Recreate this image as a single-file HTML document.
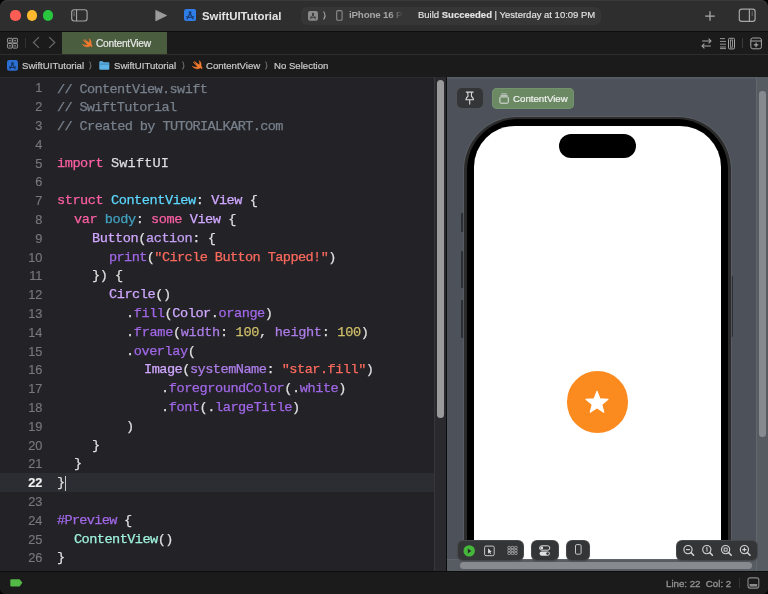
<!DOCTYPE html>
<html><head><meta charset="utf-8">
<style>
*{margin:0;padding:0;box-sizing:border-box}
html,body{width:768px;height:594px;overflow:hidden;background:#000}
body{position:relative;font-family:"Liberation Sans",sans-serif}
.a{position:absolute}
#title{left:0;top:0;width:768px;height:31px;background:#2e2e2e;border-radius:7px 7px 0 0;box-shadow:inset 0 1px 0 #3a3a3a}
#tline{left:0;top:31px;width:768px;height:1px;background:#0e0e0e}
#tabs{left:0;top:32px;width:768px;height:22px;background:#1b1b1b}
#tsep{left:0;top:54px;width:768px;height:1px;background:#2e2e2e}
#crumb{left:0;top:55px;width:768px;height:22px;background:#1b1b1b}
#editor{left:0;top:77px;width:434px;height:494px;background:#222227;border-top:1px solid #2c2c30}
#hl{left:0;top:473.2px;width:434px;height:18.8px;background:#2c2d33}
#vtrack{left:434px;top:77px;width:12px;height:494px;background:#29292e;border-left:1px solid #36363b}
#vthumb{left:437px;top:80px;width:7px;height:338px;background:#9a9a9c;border-radius:4px}
#div{left:446px;top:77px;width:1px;height:494px;background:#0c0c0e}
#canvas{left:447px;top:77px;width:321px;height:494px;background:#4d525a;overflow:hidden}
#status{left:0;top:571px;width:768px;height:23px;background:#1b1b1b;border-top:1px solid #0d0d0d;border-radius:0 0 5px 5px}
.code{will-change:transform;font-family:"Liberation Mono",monospace;font-size:13.6px;letter-spacing:-0.45px;-webkit-text-stroke:0.25px currentColor;line-height:18.76px;white-space:pre;color:#dfdfe0}
.ln{will-change:transform;font-family:"Liberation Sans",sans-serif;font-size:12.8px;letter-spacing:-0.3px;-webkit-text-stroke:0.15px currentColor;line-height:18.76px;color:#77777c;text-align:right;width:42px;left:0}
.ln.cur{color:#f2f2f2;font-weight:bold}
.c{color:#78808b}.k{color:#fc5fa3}.td{color:#5dd8ff}.od{color:#41a1c0}.t{color:#d0a8ff}.t2{color:#c4a0f4}.f{color:#a167e6}.f2{color:#ad7de8}.s{color:#fc6a5d}.n{color:#d0bf69}.p{color:#9ef1dd}
.crumbt{will-change:transform;font-size:9.6px;letter-spacing:0px;line-height:12px;color:#cacaca;white-space:nowrap;-webkit-text-stroke:0.2px currentColor}
.tb{border-radius:5px;background:#343536;box-shadow:0 0 0 1px #48494c,0 1px 2px rgba(0,0,0,.25)}

.g{will-change:transform}

</style></head><body>
<div id="title" class="a"></div>
<div class="a" style="left:10.4px;top:10.4px;width:10.2px;height:10.2px;border-radius:50%;background:#fd5d55"></div>
<div class="a" style="left:26.8px;top:10.4px;width:10.2px;height:10.2px;border-radius:50%;background:#fdb82e"></div>
<div class="a" style="left:43.1px;top:10.4px;width:10.2px;height:10.2px;border-radius:50%;background:#29c640"></div>
<svg class="a" style="left:70px;top:8px" width="19" height="15" viewBox="0 0 19 15"><rect x="1.7" y="1.7" width="15.4" height="11.3" rx="2.4" fill="none" stroke="#a4a4a4" stroke-width="1.15"/><line x1="6.55" y1="1.7" x2="6.55" y2="13" stroke="#a4a4a4" stroke-width="1.15"/><line x1="4.1" y1="3.6" x2="4.1" y2="8.2" stroke="#7c7c7c" stroke-width="1.1" stroke-dasharray="0.8 0.45"/></svg>
<svg class="a" style="left:154px;top:9px" width="14" height="14" viewBox="0 0 14 14"><path d="M1.8 1.4 L12.6 6.5 L1.8 11.8 Z" fill="#9c9c9c" stroke="#9c9c9c" stroke-width="0.8" stroke-linejoin="round"/></svg>
<svg class="a" style="left:183.9px;top:8.9px" width="12.3" height="12.2" viewBox="0 0 12.3 12.2"><rect x="0" y="0" width="12.2" height="12.1" rx="2.4" fill="#2f7de8"/><g stroke="#183c70" stroke-width="1.15" fill="none" stroke-linecap="round"><path d="M6.1 4.2 L3.1 9.9 M6.1 4.2 L9.1 9.9"/><path d="M2.6 7.7 Q6.1 9.2 9.6 7.7"/></g><circle cx="6.1" cy="3.6" r="1.35" fill="#183c70"/></svg>
<div class="a g" style="left:202px;top:8.5px;font-weight:bold;font-size:11.4px;line-height:14px;color:#e4e4e4">SwiftUITutorial</div>
<div class="a" style="left:301px;top:7px;width:300px;height:17.7px;border-radius:6px;background:#363636"></div>
<svg class="a" style="left:307.8px;top:10.6px" width="10.2" height="10" viewBox="0 0 10.2 10"><rect x="0" y="0" width="10" height="9.8" rx="2" fill="#8c8c8c"/><g stroke="#3c3c3c" stroke-width="0.95" fill="none" stroke-linecap="round"><path d="M5 3.5 L2.6 8 M5 3.5 L7.4 8"/><path d="M2.2 6.2 Q5 7.4 7.8 6.2"/></g><circle cx="5" cy="2.9" r="1.05" fill="#3c3c3c"/></svg>
<svg class="a" style="left:322px;top:10px" width="6" height="11" viewBox="0 0 6 11"><path d="M1.5 1.5 Q4.5 5.5 1.5 9.5" stroke="#a0a0a0" stroke-width="1.2" fill="none"/></svg>
<svg class="a" style="left:335.5px;top:10.2px" width="7" height="11" viewBox="0 0 7 11"><rect x="0.7" y="0.6" width="5.4" height="9.6" rx="1.3" fill="none" stroke="#8c8c8c" stroke-width="1.1"/></svg>
<div class="a g" style="left:349px;top:9.4px;font-weight:bold;font-size:9.8px;letter-spacing:-0.2px;line-height:12px;color:#a6a6a6;width:54px;overflow:hidden;white-space:nowrap;-webkit-mask-image:linear-gradient(90deg,#000 76%,transparent 100%)">iPhone 16 Pro</div>
<div class="a g" style="left:417.6px;top:9.2px;font-size:9.5px;letter-spacing:0px;line-height:12px;color:#e2e2e2;white-space:nowrap;-webkit-text-stroke:0.15px currentColor">Build <b>Succeeded</b> | Yesterday at 10:09 PM</div>
<svg class="a" style="left:704px;top:9.5px" width="12" height="12" viewBox="0 0 12 12"><path d="M6 1.2 V10.8 M1.2 6 H10.8" stroke="#ababab" stroke-width="1.25"/></svg>
<svg class="a" style="left:738px;top:8px" width="18.5" height="14.5" viewBox="0 0 18.5 14.5"><rect x="1.3" y="1.2" width="15.8" height="12.2" rx="2.4" fill="none" stroke="#a6a6a6" stroke-width="1.2"/><line x1="11.4" y1="1.2" x2="11.4" y2="13.4" stroke="#a6a6a6" stroke-width="1.2"/><line x1="14.2" y1="3.6" x2="14.2" y2="8.5" stroke="#7a7a7a" stroke-width="1.2" stroke-dasharray="1 0.6"/></svg>
<div id="tline" class="a"></div>
<div id="tabs" class="a"></div>
<svg class="a" style="left:6px;top:36.5px" width="13" height="13" viewBox="0 0 13 13"><g fill="none" stroke="#a0a0a0" stroke-width="0.95"><rect x="1.6" y="1.3" width="4.6" height="4.6" rx="0.6"/><rect x="6.8" y="1.3" width="4.6" height="4.6" rx="0.6"/><rect x="1.6" y="6.5" width="4.6" height="4.6" rx="0.6"/><rect x="6.8" y="6.5" width="4.6" height="4.6" rx="0.6"/></g><g fill="#8a8a8a"><rect x="3.1" y="2.9" width="1.6" height="1.4"/><rect x="8.3" y="2.9" width="1.6" height="1.4"/><rect x="3.1" y="8.1" width="1.6" height="1.4"/><rect x="8.3" y="8.1" width="1.6" height="1.4"/></g></svg>
<div class="a" style="left:25px;top:38px;width:1px;height:9.5px;background:#333"></div>
<svg class="a" style="left:31px;top:36px" width="26" height="13" viewBox="0 0 26 13"><path d="M8 1.2 L2.4 6.5 L8 11.8 M18.2 1.2 L23.8 6.5 L18.2 11.8" stroke="#6e6e6e" stroke-width="1.1" fill="none"/></svg>
<div class="a" style="left:62px;top:32px;width:104.7px;height:22px;background:#4a5d3f"></div>
<svg class="a swift" style="left:82px;top:38.4px" width="11" height="10" viewBox="0 0 11 10"><path d="M7.2 0.6 C8.8 2 9.6 4.2 9 5.8 C9.8 6.7 10.2 7.8 10 8.9 C9.5 8 8.4 7.6 7.6 8.2 C5 9.6 1.9 8.4 0.3 6.3 C2.2 7.4 4.4 7.4 5.8 6.6 C4 5.4 2.4 3.6 1.3 2.1 C3 3.5 4.8 4.6 5.8 5.1 C4.6 4.1 3.3 2.5 2.5 1.3 C4.6 3.2 6.4 4.4 7.3 4.9 C7.9 3.6 7.7 2 7.2 0.6 Z" fill="#f57a2e" stroke="#f57a2e" stroke-width="0.55" stroke-linejoin="round"/></svg>
<div class="a g" style="left:95.5px;top:38.3px;font-size:10.2px;letter-spacing:-0.25px;line-height:12px;color:#e8e8e8;-webkit-text-stroke:0.2px currentColor">ContentView</div>
<svg class="a" style="left:700px;top:36.5px" width="13" height="13" viewBox="0 0 13 13"><path d="M2.2 4 H11 M8.6 1.6 L11 4 L8.6 6.4 M10.8 9 H2 M4.4 6.6 L2 9 L4.4 11.4" stroke="#a6a6a6" stroke-width="1.05" fill="none"/></svg>
<svg class="a" style="left:719px;top:36.5px" width="17" height="13" viewBox="0 0 17 13"><path d="M1 1.6 H6 M1 4.4 H7 M1 7.2 H7 M1 10 H7 M1 11.6 H7" stroke="#9a9a9a" stroke-width="0.95"/><rect x="9.5" y="1.3" width="6" height="10.6" rx="1" fill="none" stroke="#a6a6a6" stroke-width="1"/><rect x="11.5" y="3" width="2" height="7.2" fill="none" stroke="#a6a6a6" stroke-width="0.8"/></svg>
<div class="a" style="left:742px;top:38px;width:1px;height:9.5px;background:#3a3a3a"></div>
<svg class="a" style="left:749.5px;top:36.5px" width="12.5" height="13" viewBox="0 0 12.5 13"><rect x="0.8" y="1" width="10.6" height="10.8" rx="2" fill="none" stroke="#a6a6a6" stroke-width="1"/><line x1="0.8" y1="4" x2="11.4" y2="4" stroke="#a6a6a6" stroke-width="1"/><path d="M6.1 5.6 V10.2 M3.8 7.9 H8.4" stroke="#c0c0c0" stroke-width="1"/></svg>
<div id="tsep" class="a"></div>
<div id="crumb" class="a"></div>
<svg class="a" style="left:7px;top:60.2px" width="11.2" height="11" viewBox="0 0 11.2 11"><rect x="0" y="0" width="11" height="10.8" rx="2.2" fill="#2c6fd4"/><g stroke="#16335f" stroke-width="1.05" fill="none" stroke-linecap="round"><path d="M5.5 3.8 L2.8 8.9 M5.5 3.8 L8.2 8.9"/><path d="M2.3 6.9 Q5.5 8.2 8.7 6.9"/></g><circle cx="5.5" cy="3.2" r="1.2" fill="#16335f"/></svg>
<div class="a crumbt" style="left:21.9px;top:59.6px">SwiftUITutorial</div>
<svg class="a" style="left:87.5px;top:60px" width="6" height="11" viewBox="0 0 6 11"><path d="M1.5 1.5 Q4.2 5.5 1.5 9.5" stroke="#6a6a6a" stroke-width="1.1" fill="none"/></svg>
<svg class="a" style="left:99.4px;top:60.8px" width="10.6" height="9" viewBox="0 0 10.6 9"><path d="M0.3 1.1 Q0.3 0.2 1.2 0.2 H3.6 L4.6 1.2 H9.4 Q10.3 1.2 10.3 2.1 V7.8 Q10.3 8.7 9.4 8.7 H1.2 Q0.3 8.7 0.3 7.8 Z" fill="#5cb2e6"/><rect x="0.3" y="2.6" width="10" height="0.9" fill="#3f7fa8"/></svg>
<div class="a crumbt" style="left:114.4px;top:59.6px">SwiftUITutorial</div>
<svg class="a" style="left:180.5px;top:60px" width="6" height="11" viewBox="0 0 6 11"><path d="M1.5 1.5 Q4.2 5.5 1.5 9.5" stroke="#6a6a6a" stroke-width="1.1" fill="none"/></svg>
<svg class="a" style="left:191.8px;top:60.2px" width="11" height="10" viewBox="0 0 11 10"><path d="M7.2 0.6 C8.8 2 9.6 4.2 9 5.8 C9.8 6.7 10.2 7.8 10 8.9 C9.5 8 8.4 7.6 7.6 8.2 C5 9.6 1.9 8.4 0.3 6.3 C2.2 7.4 4.4 7.4 5.8 6.6 C4 5.4 2.4 3.6 1.3 2.1 C3 3.5 4.8 4.6 5.8 5.1 C4.6 4.1 3.3 2.5 2.5 1.3 C4.6 3.2 6.4 4.4 7.3 4.9 C7.9 3.6 7.7 2 7.2 0.6 Z" fill="#f57a2e" stroke="#f57a2e" stroke-width="0.55" stroke-linejoin="round"/></svg>
<div class="a crumbt" style="left:206.3px;top:59.6px">ContentView</div>
<svg class="a" style="left:264px;top:60px" width="6" height="11" viewBox="0 0 6 11"><path d="M1.5 1.5 Q4.2 5.5 1.5 9.5" stroke="#6a6a6a" stroke-width="1.1" fill="none"/></svg>
<div class="a crumbt" style="left:274.3px;top:59.6px">No Selection</div>
<div id="editor" class="a"></div>
<div id="hl" class="a"></div>
<div class="a ln" style="top:79.30px">1</div>
<div class="a code" style="top:80.50px;left:57.00px;letter-spacing:-0.650px"><span class="c">// ContentView.swift</span></div>
<div class="a ln" style="top:98.10px">2</div>
<div class="a code" style="top:99.10px;left:57.00px;letter-spacing:-0.690px"><span class="c">// SwiftTutorial</span></div>
<div class="a ln" style="top:116.90px">3</div>
<div class="a code" style="top:117.70px;left:57.00px;letter-spacing:-0.630px"><span class="c">// Created by TUTORIALKART.com</span></div>
<div class="a ln" style="top:135.70px">4</div>
<div class="a ln" style="top:154.50px">5</div>
<div class="a code" style="top:154.50px;left:57.00px"><span class="k">import</span> <span style="letter-spacing:0.15px">SwiftUI</span></div>
<div class="a ln" style="top:173.30px">6</div>
<div class="a ln" style="top:192.10px">7</div>
<div class="a code" style="top:192.10px;left:57.00px"><span class="k">struct</span> <span class="td">ContentView</span>: <span class="t">View</span> {</div>
<div class="a ln" style="top:210.90px">8</div>
<div class="a code" style="top:210.90px;left:74.30px"><span class="k">var</span> <span class="od">body</span>: <span class="k">some</span> <span class="t">View</span> {</div>
<div class="a ln" style="top:229.70px">9</div>
<div class="a code" style="top:229.70px;left:91.60px"><span class="t">Button</span>(<span class="t2">action</span>: {</div>
<div class="a ln" style="top:248.50px">10</div>
<div class="a code" style="top:248.50px;left:108.90px;letter-spacing:-0.600px"><span class="f">print</span>(<span class="s">"Circle Button Tapped!"</span>)</div>
<div class="a ln" style="top:267.30px">11</div>
<div class="a code" style="top:267.30px;left:91.60px">}) {</div>
<div class="a ln" style="top:286.10px">12</div>
<div class="a code" style="top:286.10px;left:108.90px"><span class="t">Circle</span>()</div>
<div class="a ln" style="top:304.90px">13</div>
<div class="a code" style="top:304.90px;left:126.20px">.<span class="f">fill</span>(<span class="t">Color</span>.<span class="f">orange</span>)</div>
<div class="a ln" style="top:323.70px">14</div>
<div class="a code" style="top:323.70px;left:126.20px;letter-spacing:-0.330px">.<span class="f">frame</span>(<span class="f2">width</span>: <span class="n">100</span>, <span class="f2">height</span>: <span class="n">100</span>)</div>
<div class="a ln" style="top:342.50px">15</div>
<div class="a code" style="top:342.50px;left:126.20px">.<span class="f">overlay</span>(</div>
<div class="a ln" style="top:361.30px">16</div>
<div class="a code" style="top:361.30px;left:143.50px;letter-spacing:-0.510px"><span class="t">Image</span>(<span class="f2">systemName</span>: <span class="s">"star.fill"</span>)</div>
<div class="a ln" style="top:380.10px">17</div>
<div class="a code" style="top:380.10px;left:160.80px">.<span class="f">foregroundColor</span>(.<span class="f">white</span>)</div>
<div class="a ln" style="top:398.90px">18</div>
<div class="a code" style="top:398.90px;left:160.80px">.<span class="f">font</span>(.<span class="f">largeTitle</span>)</div>
<div class="a ln" style="top:417.70px">19</div>
<div class="a code" style="top:417.70px;left:126.20px">)</div>
<div class="a ln" style="top:436.50px">20</div>
<div class="a code" style="top:436.50px;left:91.60px">}</div>
<div class="a ln" style="top:455.30px">21</div>
<div class="a code" style="top:455.30px;left:74.30px">}</div>
<div class="a ln cur" style="top:474.10px">22</div>
<div class="a code" style="top:474.10px;left:57.00px">}</div>
<div class="a ln" style="top:492.90px">23</div>
<div class="a ln" style="top:511.70px">24</div>
<div class="a code" style="top:511.70px;left:57.00px;letter-spacing:-0.710px"><span class="f">#Preview</span> {</div>
<div class="a ln" style="top:530.50px">25</div>
<div class="a code" style="top:530.50px;left:74.30px;letter-spacing:-0.550px"><span class="p">ContentView</span>()</div>
<div class="a ln" style="top:549.30px">26</div>
<div class="a code" style="top:549.30px;left:57.00px">}</div>
<div class="a" style="left:65px;top:475.5px;width:1px;height:15px;background:#c8c8c8"></div>
<div id="vtrack" class="a"></div>
<div id="vthumb" class="a"></div>
<div id="div" class="a"></div>
<div id="canvas" class="a">
  <div class="a" style="left:0;top:0;width:321px;height:1.5px;background:#565b63"></div>
  <!-- phone -->
  <div class="a" style="left:13.5px;top:136px;width:3.5px;height:19px;background:#2b2e32;border-radius:1px"></div>
  <div class="a" style="left:13.5px;top:173.5px;width:3.5px;height:37px;background:#2b2e32;border-radius:1px"></div>
  <div class="a" style="left:13.5px;top:222.5px;width:3.5px;height:38px;background:#2b2e32;border-radius:1px"></div>
  <div class="a" style="left:283px;top:199px;width:3px;height:60.5px;background:#2b2e32;border-radius:1px"></div>
  <div class="a" style="left:17px;top:39.7px;width:266.5px;height:560px;border-radius:53px;background:#2b2b2b;box-shadow:0 0 0 0.8px #5d6166"></div>
  <div class="a" style="left:19.8px;top:42.2px;width:260.9px;height:555px;border-radius:51px;background:#000"></div>
  <div class="a" style="left:27px;top:49px;width:246.5px;height:540px;border-radius:41px;background:#fff"></div>
  <div class="a" style="left:111.6px;top:57.2px;width:77.6px;height:23.4px;border-radius:12px;background:#000"></div>
  <div class="a" style="left:119.6px;top:294.2px;width:61.4px;height:61.4px;border-radius:50%;background:#fb8a1f"></div>
  <svg class="a" style="left:138.3px;top:312.8px" width="24" height="26" viewBox="0 0 24 26"><path d="M12.00 1.30 L14.94 8.85 L23.03 9.32 L16.76 14.45 L18.82 22.28 L12.00 17.90 L5.18 22.28 L7.24 14.45 L0.97 9.32 L9.06 8.85 Z" fill="#fff" stroke="#fff" stroke-width="1.1" stroke-linejoin="round"/></svg>
  <!-- pin & tab -->
  <div class="a" style="left:10.4px;top:10.7px;width:25.9px;height:20.4px;border-radius:5px;background:#333536;box-shadow:0 0 0 1px #4e5155"></div>
  <svg class="a" style="left:16px;top:13px" width="14" height="16" viewBox="0 0 14 16"><path d="M3.3 2.1 H10.1 M4.5 2.1 Q5.3 4.6 5 6.2 Q3.1 7.6 2.9 9.7 H10.5 Q10.3 7.6 8.4 6.2 Q8.1 4.6 8.9 2.1 M6.7 9.9 V14.1" stroke="#dadada" stroke-width="1.1" fill="none" stroke-linejoin="round" stroke-linecap="round"/></svg>
  <div class="a" style="left:45px;top:10.5px;width:82.2px;height:21.1px;border-radius:5px;background:#6b8a63;box-shadow:inset 0 0 0 0.7px #779670"></div>
  <svg class="a" style="left:51.5px;top:15.5px" width="11" height="11" viewBox="0 0 11 11"><rect x="0.9" y="3.9" width="8.4" height="6.3" rx="0.9" fill="none" stroke="#e2e2e2" stroke-width="1"/><path d="M1.6 2.4 H8.6 M2.3 0.9 H7.9" stroke="#cfcfcf" stroke-width="0.9"/></svg>
  <div class="a g" style="left:66px;top:15.8px;font-size:9.7px;line-height:11px;color:#f2f2f2;-webkit-text-stroke:0.2px currentColor">ContentView</div>
  <!-- h scroller -->
  <div class="a" style="left:0;top:482px;width:309px;height:12px;background:#575c63;border-top:1px solid #60656c"></div>
  <div class="a" style="left:13px;top:485px;width:292px;height:6.8px;border-radius:3.5px;background:#878b8f"></div>
  <!-- v scroller -->
  <div class="a" style="left:309px;top:0;width:12px;height:494px;background:#575c63;border-left:1.5px solid #62676d"></div>
  <div class="a" style="left:312px;top:13.7px;width:6.6px;height:346.5px;border-radius:3.3px;background:#878b8f"></div>
  <!-- bottom toolbars -->
  <div class="a tb" style="left:10.8px;top:463.8px;width:65.4px;height:19.6px"></div>
  <svg class="a" style="left:14px;top:466.3px" width="60" height="15" viewBox="0 0 60 15"><circle cx="8.2" cy="7.9" r="5.7" fill="#45b83c"/><path d="M6.8 5.4 L10.4 7.9 L6.8 10.4 Z" fill="#2a2a2a"/><rect x="23.6" y="3.1" width="9.6" height="9.6" rx="1.4" fill="none" stroke="#c8c8c8" stroke-width="1"/><path d="M27.1 5.3 L27.1 10.7 L28.3 9.5 L29.3 11.1 L30.1 10.7 L29.2 9.1 L30.7 8.9 Z" fill="#e0e0e0"/><g fill="none" stroke="#b0b0b0" stroke-width="0.85"><rect x="46.80" y="3.40" width="2.7" height="2.4" rx="1"/><rect x="46.80" y="6.25" width="2.7" height="2.4" rx="1"/><rect x="46.80" y="9.10" width="2.7" height="2.4" rx="1"/><rect x="50.15" y="3.40" width="2.7" height="2.4" rx="1"/><rect x="50.15" y="6.25" width="2.7" height="2.4" rx="1"/><rect x="50.15" y="9.10" width="2.7" height="2.4" rx="1"/><rect x="53.50" y="3.40" width="2.7" height="2.4" rx="1"/><rect x="53.50" y="6.25" width="2.7" height="2.4" rx="1"/><rect x="53.50" y="9.10" width="2.7" height="2.4" rx="1"/></g></svg>
  <div class="a tb" style="left:85px;top:463.8px;width:26.4px;height:19.6px"></div>
  <svg class="a" style="left:91px;top:466.5px" width="14" height="14" viewBox="0 0 14 14"><rect x="1.6" y="1.8" width="10.2" height="4.4" rx="2.2" fill="none" stroke="#e0e0e0" stroke-width="1"/><circle cx="3.8" cy="4" r="1.4" fill="#e0e0e0"/><rect x="1.6" y="7.4" width="10.2" height="4.4" rx="2.2" fill="#e0e0e0"/><circle cx="9.6" cy="9.6" r="1.3" fill="#333"/></svg>
  <div class="a tb" style="left:120.2px;top:463.8px;width:21.5px;height:19.6px"></div>
  <svg class="a" style="left:126px;top:466px" width="10" height="14" viewBox="0 0 10 14"><rect x="2.5" y="1.6" width="5.6" height="9.6" rx="1.3" fill="none" stroke="#c8c8c8" stroke-width="1"/></svg>
  <div class="a tb" style="left:229.9px;top:463.5px;width:80.1px;height:19.5px"></div>
  <svg class="a" style="left:234px;top:466.3px" width="74" height="16" viewBox="0 0 74 16"><g fill="none" stroke="#d4d4d4" stroke-width="1.15"><circle cx="7.0" cy="6.6" r="4.1"/><path d="M9.90 9.50 L12.60 12.20" stroke-width="1.6" stroke-linecap="round"/><path d="M5.00 6.6 H9.00"/><circle cx="25.8" cy="6.6" r="4.1"/><path d="M28.70 9.50 L31.40 12.20" stroke-width="1.6" stroke-linecap="round"/><path d="M24.90 5.3 L26.00 4.5 V8.7" stroke-width="0.95"/><circle cx="44.6" cy="6.6" r="4.1"/><path d="M47.50 9.50 L50.20 12.20" stroke-width="1.6" stroke-linecap="round"/><rect x="43.10" y="5.1" width="3" height="3" stroke-width="0.95"/><circle cx="63.4" cy="6.6" r="4.1"/><path d="M66.30 9.50 L69.00 12.20" stroke-width="1.6" stroke-linecap="round"/><path d="M61.40 6.6 H65.40 M63.4 4.6 V8.6"/></g></svg>
</div>
<div id="status" class="a"></div>
<svg class="a" style="left:9.5px;top:579px" width="13" height="8" viewBox="0 0 13 8"><path d="M1.3 0.3 H9.6 L12.4 3.8 L9.6 7.4 H1.3 Q0.3 7.4 0.3 6.4 V1.3 Q0.3 0.3 1.3 0.3 Z" fill="#54b846"/></svg>
<div class="a g" style="left:665.8px;top:577.7px;font-size:9.7px;line-height:12px;color:#909090;white-space:pre;-webkit-text-stroke:0.35px currentColor">Line: 22  Col: 2</div>
<div class="a" style="left:739.3px;top:578px;width:1px;height:10px;background:#333"></div>
<svg class="a" style="left:746.6px;top:577px" width="13" height="12" viewBox="0 0 13 12"><rect x="1" y="0.9" width="10.8" height="10.2" rx="2" fill="none" stroke="#8a8a8a" stroke-width="1.1"/><rect x="2.6" y="7" width="7.6" height="2.6" fill="#8a8a8a"/></svg>

</body></html>
